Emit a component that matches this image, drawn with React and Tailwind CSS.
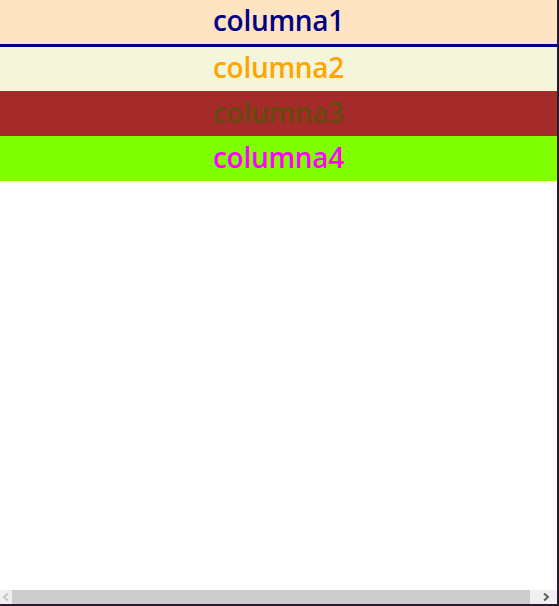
export default function App() {
    const rows = [
        { label: "columna1", cls: "h-[47px] bg-[#ffe4c4] text-[#000080] font-bold border-b-[3px] border-[#000090]" },
        { label: "columna2", cls: "h-[44px] bg-[#f5f5dc] text-[#ffa500]" },
        { label: "columna3", cls: "h-[45px] bg-[#a52a2a] text-[#664a0c]" },
        { label: "columna4", cls: "h-[45px] bg-[#7fff00] text-[#ff00ff]" },
    ];

    return (
        <div className="w-[559px] h-[606px] flex flex-col bg-white border-r-2 border-b-2 border-[#2a1a2e] overflow-hidden">
            {/* Stacked colour rows */}
            <div className="flex-1 flex flex-col">
                {rows.map((r) => (
                    <div
                        key={r.label}
                        className={`shrink-0 flex items-center justify-center pb-[4px] text-[28px] font-semibold leading-none tracking-[-0.3px] font-['Open_Sans',sans-serif] ${r.cls}`}
                    >
                        {r.label}
                    </div>
                ))}
            </div>

            {/* Horizontal scrollbar */}
            <div className="h-[14px] flex bg-[#f0f0f0]">
                <div className="w-[12px] flex items-center justify-center">
                    <svg width="6" height="8" viewBox="0 0 6 8">
                        <path d="M5 0.5 L1 4 L5 7.5" stroke="#c4c4c4" strokeWidth="2" fill="none" />
                    </svg>
                </div>
                <div className="w-[518px] bg-[#cdcdcd]" />
                <div className="flex-1 flex items-center justify-end pr-[8px]">
                    <svg width="6" height="8" viewBox="0 0 6 8">
                        <path d="M1 0.5 L5 4 L1 7.5" stroke="#606060" strokeWidth="2" fill="none" />
                    </svg>
                </div>
            </div>
        </div>
    );
}
